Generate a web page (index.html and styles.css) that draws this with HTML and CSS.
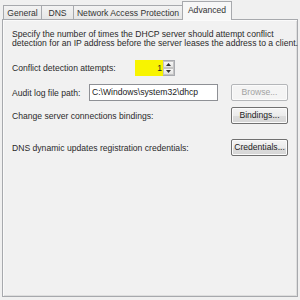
FILE: index.html
```html
<!DOCTYPE html>
<html>
<head>
<meta charset="utf-8">
<link rel="stylesheet" href="styles.css">
</head>
<body>
<div class="dialog">
  <div class="tabs">
    <div class="tab t-general">General</div>
    <div class="tab t-dns">DNS</div>
    <div class="tab t-nap">Network Access Protection</div>
    <div class="tab active t-adv">Advanced</div>
  </div>
  <div class="panel">
    <p class="desc">Specify the number of times the DHCP server should attempt conflict<br>detection for an IP address before the server leases the address to a client.</p>
    <div class="row r-conflict">
      <span class="label l-conflict">Conflict detection attempts:</span>
      <div class="spin">
        <span class="spin-value">1</span>
        <span class="spin-btns">
          <span class="spin-btn"><svg width="5" height="3" viewBox="0 0 5 3"><path d="M0 3 L2.5 0 L5 3 Z" fill="#333"/></svg></span>
          <span class="spin-btn"><svg width="5" height="3" viewBox="0 0 5 3"><path d="M0 0 L2.5 3 L5 0 Z" fill="#333"/></svg></span>
        </span>
      </div>
    </div>
    <div class="row r-audit">
      <span class="label l-audit">Audit log file path:</span>
      <div class="textbox">C:\Windows\system32\dhcp</div>
      <div class="btn disabled">Browse...</div>
    </div>
    <div class="row r-bind">
      <span class="label">Change server connections bindings:</span>
      <div class="btn">Bindings...</div>
    </div>
    <div class="row r-cred">
      <span class="label">DNS dynamic updates registration credentials:</span>
      <div class="btn">Credentials...</div>
    </div>
  </div>
</div>
</body>
</html>
```

FILE: styles.css
```css
html, body {
  margin: 0;
  padding: 0;
  background: #f0f0f0;
}
body {
  width: 300px;
  height: 300px;
  overflow: hidden;
  font-family: "Liberation Sans", Arial, sans-serif;
  font-size: 8.6px;
  color: #222;
  white-space: nowrap;
}
.dialog {
  padding: 1px 2px 2px 2px;
  display: flex;
  flex-direction: column;
  height: 299px;
  box-sizing: border-box;
}
.tabs {
  display: flex;
  align-items: flex-end;
  height: 18px;
  padding-left: 1px;
  position: relative;
  z-index: 2;
}
.tab {
  height: 14px;
  line-height: 14px;
  box-sizing: border-box;
  border: 1px solid #a7a9ad;
  border-bottom: none;
  background: linear-gradient(#f3f3f3, #e6e6e6);
  padding: 0;
  text-align: center;
  margin-right: -1px;
  color: #333;
}
.t-general { width: 39px; }
.t-dns { width: 33px; }
.t-nap { width: 110px; }
.tab.active {
  height: 19px;
  line-height: 17px;
  background: #f7f7f7;
  width: 50px;
  margin-bottom: -1px;
}
.panel {
  flex: 1;
  border: 1px solid #a7a9ad;
  background: #f1f1f1;
  padding: 0 9px 0 9px;
  box-shadow: inset 1px 1px 0 #fafafa, inset -1px -1px 0 #dedede;
}
.desc {
  margin: 10px 0 0 0;
  line-height: 9px;
  color: #2a2a2a;
}
.row {
  display: flex;
  align-items: center;
  height: 17px;
}
.label {
  color: #2a2a2a;
}
.r-conflict { margin-top: 11px; }
.r-audit { margin-top: 8px; }
.r-bind { margin-top: 6px; }
.r-cred { margin-top: 15px; }
.l-conflict { width: 123px; }
.l-audit { width: 77px; }
.spin {
  display: flex;
  height: 16px;
  box-sizing: border-box;
}
.spin-value {
  width: 28px;
  background: #f8f400;
  text-align: right;
  line-height: 16px;
  padding-right: 1px;
  box-sizing: border-box;
  color: #222;
}
.spin-btns {
  display: flex;
  flex-direction: column;
  width: 11px;
  border: 1px solid #a9abb0;
  border-left: none;
  background: #fff;
}
.spin-btn {
  flex: 1;
  display: flex;
  align-items: center;
  justify-content: center;
  background: linear-gradient(#f7f7f7, #e3e3e3);
  border: 1px solid #c4c4c4;
}
.textbox {
  width: 129px;
  height: 17px;
  box-sizing: border-box;
  border: 1px solid #8e9095;
  background: #fff;
  padding-left: 2px;
  line-height: 14px;
  color: #222;
}
.btn {
  margin-left: auto;
  width: 57px;
  height: 17px;
  box-sizing: border-box;
  border: 1px solid #707070;
  border-radius: 2px;
  background: linear-gradient(#f4f4f4 0%, #ebebeb 50%, #dcdcdc 51%, #d6d6d6 100%);
  text-align: center;
  line-height: 15px;
  color: #222;
  box-shadow: inset 0 0 0 1px #fbfbfb;
}
.btn.disabled {
  border-color: #b4b6b9;
  background: #f4f4f4;
  color: #a2a2a2;
}
```
